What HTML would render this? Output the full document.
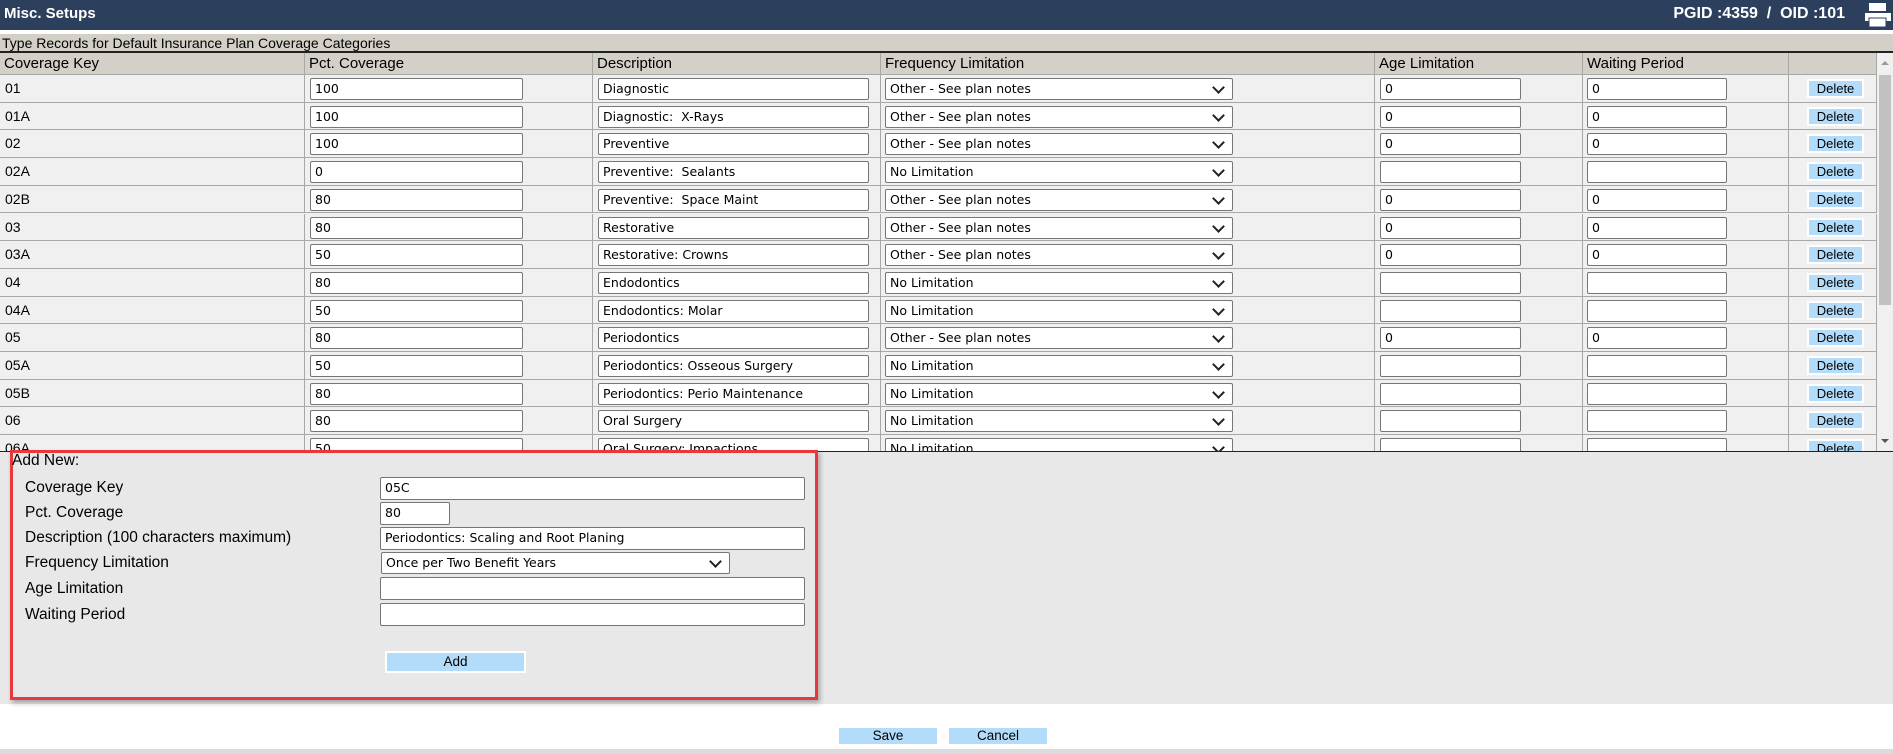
<!DOCTYPE html>
<html><head><style>
*{box-sizing:border-box;margin:0;padding:0}
body{width:1893px;height:754px;overflow:hidden;background:#fff;font-family:"Liberation Sans",Arial,sans-serif;position:relative}
.top{position:absolute;left:0;top:0;width:1893px;height:30px;background:#2c405e;color:#fff;font-weight:bold;font-size:15px}
.band{position:absolute;left:0;top:34px;width:1893px;height:19px;background:#d4d0c8;font-size:14px;line-height:19px;padding-left:2px;border-bottom:2px solid #222}
.grid{position:absolute;left:0;top:53px;width:1877px;height:398px;overflow:hidden;background:#f0f0f0}
.row{position:absolute;left:0;width:1877px;height:27.7px;border-bottom:1px solid #a8a8a8;font-size:14px}
.hd{background:#d4d0c8;height:22px}
.c{position:absolute;top:0;height:100%;border-right:1px solid #a8a8a8;padding-left:5px;line-height:22px}
.hd .c{font-size:15px;padding-left:4px;line-height:22px}
.in{position:absolute;height:22px;background:#fff;border:1px solid #767676;border-radius:2px;font-family:"DejaVu Sans",Verdana,sans-serif;font-size:12.5px;line-height:20px;padding-left:4px;top:3px}
.sel:after{content:"";position:absolute;right:9px;top:4px;width:7px;height:7px;border-right:2px solid #222;border-bottom:2px solid #222;transform:rotate(45deg)}
.del{position:absolute;left:1807px;top:4px;width:57px;height:19px;background:#b3dcfa;border:2px solid #fff;font-size:13px;text-align:center;line-height:15px}
.sb{position:absolute;left:1877px;top:53px;width:16px;height:398px;background:#f0f0f0}
.add{position:absolute;left:0;top:451px;width:1893px;height:253px;background:#e8e8e8;border-top:1px solid #222}
.box{position:absolute;left:10px;top:450px;width:808px;height:250px;border:3px solid #e8383d;box-shadow:2px 3px 5px rgba(0,0,0,.3)}
.lbl{position:absolute;left:25px;font-size:15.5px}
.btn{position:absolute;background:#b3dcfa;border:2px solid #fff;font-size:13.5px;text-align:center}
</style></head><body>
<div class="top"><span style="position:absolute;left:4px;top:5px">Misc. Setups</span><span style="position:absolute;right:48px;top:5px;font-size:16px">PGID :4359 &nbsp;/ &nbsp;OID :101</span>
<svg style="position:absolute;left:1863px;top:2px" width="30" height="26"><rect x="6" y="1" width="17" height="8" fill="#fff"/><rect x="2" y="11" width="26" height="8" fill="#fff"/><rect x="6" y="16" width="17" height="9" fill="#fff" stroke="#2c405e"/></svg></div>
<div class="band">Type Records for Default Insurance Plan Coverage Categories</div>
<div class="grid">
<div class="row hd" style="top:0">
<div class="c" style="left:0;width:305px">Coverage Key</div><div class="c" style="left:305px;width:288px">Pct. Coverage</div><div class="c" style="left:593px;width:288px">Description</div><div class="c" style="left:881px;width:494px">Frequency Limitation</div><div class="c" style="left:1375px;width:208px">Age Limitation</div><div class="c" style="left:1583px;width:206px">Waiting Period</div><div class="c" style="left:1789px;width:88px"></div></div>
<div id="rows"></div>
</div>
<div class="sb"><div style="position:absolute;left:4px;top:4px;width:0;height:0;border:4px solid transparent;border-bottom-color:#999"></div><div style="position:absolute;left:2px;top:22px;width:12px;height:230px;background:#c1c1c1"></div><div style="position:absolute;left:4px;top:386px;border:4px solid transparent;border-top-color:#555"></div></div>
<div class="add"></div>
<div class="box"></div>
<div class="lbl" style="left:12px;top:452px">Add New:</div>
<div class="lbl" style="top:479px">Coverage Key</div>
<div class="lbl" style="top:504px">Pct. Coverage</div>
<div class="lbl" style="top:529px">Description (100 characters maximum)</div>
<div class="lbl" style="top:554px">Frequency Limitation</div>
<div class="lbl" style="top:580px">Age Limitation</div>
<div class="lbl" style="top:606px">Waiting Period</div>
<div class="in" style="left:380px;top:477px;width:425px;height:23px">05C</div>
<div class="in" style="left:380px;top:502px;width:70px;height:23px">80</div>
<div class="in" style="left:380px;top:527px;width:425px;height:23px">Periodontics: Scaling and Root Planing</div>
<div class="in sel" style="left:381px;top:552px;width:349px;height:22px">Once per Two Benefit Years</div>
<div class="in" style="left:380px;top:577px;width:425px;height:23px"></div>
<div class="in" style="left:380px;top:603px;width:425px;height:23px"></div>
<div class="btn" style="left:385px;top:651px;width:141px;height:22px;line-height:18px">Add</div>
<div class="btn" style="left:837px;top:726px;width:102px;height:20px;line-height:16px">Save</div>
<div class="btn" style="left:947px;top:726px;width:102px;height:20px;line-height:16px">Cancel</div>
<div style="position:absolute;left:0;top:749px;width:1893px;height:5px;background:#d9dcdc"></div>
<script>
var d=[["01","100","Diagnostic","Other - See plan notes","0","0"],["01A","100","Diagnostic:  X-Rays","Other - See plan notes","0","0"],["02","100","Preventive","Other - See plan notes","0","0"],["02A","0","Preventive:  Sealants","No Limitation","",""],["02B","80","Preventive:  Space Maint","Other - See plan notes","0","0"],["03","80","Restorative","Other - See plan notes","0","0"],["03A","50","Restorative: Crowns","Other - See plan notes","0","0"],["04","80","Endodontics","No Limitation","",""],["04A","50","Endodontics: Molar","No Limitation","",""],["05","80","Periodontics","Other - See plan notes","0","0"],["05A","50","Periodontics: Osseous Surgery","No Limitation","",""],["05B","80","Periodontics: Perio Maintenance","No Limitation","",""],["06","80","Oral Surgery","No Limitation","",""],["06A","50","Oral Surgery: Impactions","No Limitation","",""]];
var h="";d.forEach(function(r,i){var t=22+i*27.7;
h+='<div class="row" style="top:'+t+'px"><div class="c" style="left:0;width:305px;line-height:27px">'+r[0]+'</div><div class="c" style="left:305px;width:288px"></div><div class="c" style="left:593px;width:288px"></div><div class="c" style="left:881px;width:494px"></div><div class="c" style="left:1375px;width:208px"></div><div class="c" style="left:1583px;width:206px"></div><div class="c" style="left:1789px;width:88px"></div>'+
'<div class="in" style="left:310px;width:213px">'+r[1]+'</div><div class="in" style="left:598px;width:271px">'+r[2].replace(/  /g,"&nbsp; ")+'</div><div class="in sel" style="left:885px;width:348px">'+r[3]+'</div><div class="in" style="left:1380px;width:141px">'+r[4]+'</div><div class="in" style="left:1587px;width:140px">'+r[5]+'</div><div class="del">Delete</div></div>';});
document.getElementById("rows").innerHTML=h;
</script>
</body></html>
